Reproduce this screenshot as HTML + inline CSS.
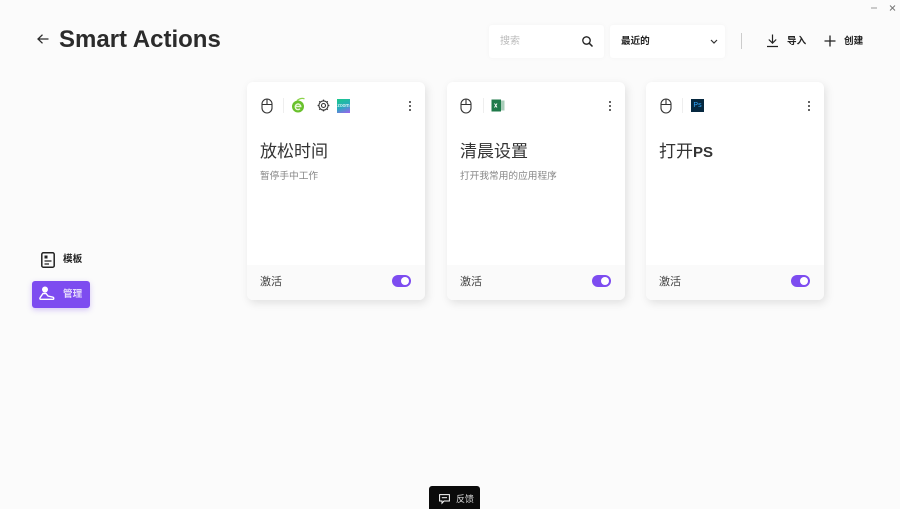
<!DOCTYPE html>
<html><head><meta charset="utf-8">
<style>
*{box-sizing:border-box;margin:0;padding:0}
html,body{width:900px;height:509px;overflow:hidden;background:#fbfbfb;font-family:"Liberation Sans","Noto Sans CJK SC",sans-serif;color:#2b2b2b}
.a{position:absolute}
svg{position:absolute;overflow:visible}
.box{position:absolute;background:#fff;border-radius:3px;box-shadow:0 0 4px rgba(0,0,0,.04)}
.card{position:absolute;top:82px;width:178px;height:218px;background:#fff;border-radius:6px;box-shadow:2px 3px 9px rgba(0,0,0,.11);overflow:hidden}
.foot{position:absolute;left:0;right:0;bottom:0;height:35px;background:#fafafa}
.foot span{position:absolute;left:13px;top:8px;font-size:11px;line-height:18px;color:#444}
.tg{position:absolute;left:145px;top:10px;width:19px;height:12px;border-radius:6px;background:#7d4cf0}
.tg i{position:absolute;right:2px;top:2px;width:8px;height:8px;border-radius:50%;background:#fff}
.t{position:absolute;left:13px;top:58px;font-size:17px;line-height:24px;color:#333;white-space:nowrap}
.s{position:absolute;left:13px;top:88px;font-size:9.700px;line-height:14px;color:#888;white-space:nowrap}
.dv{position:absolute;left:36px;top:16px;width:1px;height:15px;background:#eee}
.dots{position:absolute;left:162px;top:18.500px;width:2.400px;height:2.400px;border-radius:50%;background:#333;box-shadow:0 4px 0 #333,0 8px 0 #333}
.b{font-weight:700;font-size:9.600px;line-height:14px;color:#222;white-space:nowrap;position:absolute}
</style></head><body>

<svg style="left:870px;top:5px" width="24" height="6" viewBox="0 0 24 6"><path d="M1 3H7" stroke="#999" stroke-width="1"/><path d="M20 0.500L25 5.500M25 .5L20 5.500" stroke="#777" stroke-width="1"/></svg>

<svg style="left:36px;top:32px" width="14" height="14" viewBox="0 0 14 14"><path d="M12.500 7H2M6.500 2.700L2 7L6.500 11.300" fill="none" stroke="#2b2b2b" stroke-width="1.300"/></svg>
<div class="a" style="left:59px;top:24px;font-size:24px;line-height:32px;font-weight:700;color:#2b2b2b;white-space:nowrap">Smart Actions</div>

<div class="box" style="left:489px;top:25px;width:115px;height:33px"></div>
<div class="a" style="left:500px;top:35px;font-size:10px;line-height:14px;color:#bbb">搜索</div>
<svg style="left:581px;top:35px" width="13" height="13" viewBox="0 0 13 13"><circle cx="5.500" cy="5.500" r="3.700" fill="none" stroke="#222" stroke-width="1.300"/><path d="M8.300 8.300L11.500 11.500" stroke="#222" stroke-width="1.500"/></svg>
<div class="box" style="left:610px;top:25px;width:115px;height:33px"></div>
<div class="b" style="left:621px;top:35px">最近的</div>
<svg style="left:710px;top:39px" width="8" height="5" viewBox="0 0 8 5"><path d="M1 1L4 4L7 1" fill="none" stroke="#333" stroke-width="1.200"/></svg>
<div class="a" style="left:741px;top:33px;width:1px;height:16px;background:#ccc"></div>
<svg style="left:766px;top:34px" width="13" height="14" viewBox="0 0 13 14"><path d="M6.500 0.500V9M2.800 5.500L6.500 9.200L10.200 5.500M1 12.500H12" fill="none" stroke="#222" stroke-width="1.200"/></svg>
<div class="b" style="left:787px;top:35px">导入</div>
<svg style="left:824px;top:35px" width="12" height="12" viewBox="0 0 12 12"><path d="M6 .5V11.500M.5 6H11.500" stroke="#222" stroke-width="1.300"/></svg>
<div class="b" style="left:844px;top:35px">创建</div>

<svg style="left:41px;top:252px" width="14" height="16" viewBox="0 0 14 16"><rect x=".8" y=".8" width="12.400" height="14.400" rx="1.500" fill="none" stroke="#222" stroke-width="1.500"/><rect x="3.500" y="3.500" width="3" height="3" fill="#222"/><path d="M3.500 9H10.500M3.500 12H8" stroke="#222" stroke-width="1.200"/></svg>
<div class="b" style="left:63px;top:253px">模板</div>
<div class="a" style="left:32px;top:281px;width:58px;height:27px;border-radius:3px;background:#7d4cf0;box-shadow:0 2px 6px rgba(125,76,240,.3)"></div>
<svg style="left:39px;top:286px" width="16" height="15" viewBox="0 0 16 15"><circle cx="6" cy="3.500" r="3" fill="#fff"/><path d="M4 7.500H7L9 10L14 11.200C15 11.500 15 13.300 14 13.300H1.500C.7 13.300 .7 12.300 1.200 11.500Z" fill="none" stroke="#fff" stroke-width="1.400"/></svg>
<div class="b" style="left:63px;top:288px;color:#e4dafc">管理</div>

<div class="card" style="left:247px">
<svg style="left:14px;top:16px" width="12" height="16" viewBox="0 0 12 16"><rect x="1" y="1" width="10" height="14" rx="5" fill="none" stroke="#333" stroke-width="1.100"/><path d="M1 6.500H11M6 1V6.500" stroke="#333" stroke-width="1.100"/></svg>
<div class="dv"></div>
<svg style="left:45px;top:16px" width="13" height="15" viewBox="0 0 13 15"><circle cx="6" cy="8.500" r="6" fill="#69c12c"/><path d="M3.500 8.500H8.800A2.800 2.800 0 1 0 8 10.800" fill="none" stroke="#e8f6d8" stroke-width="1.400"/><path d="M5 2.500Q9-.5 12.500 .8" fill="none" stroke="#8bd34a" stroke-width="1.200"/></svg>
<svg style="left:70px;top:17px" width="13" height="13" viewBox="0 0 13 13"><circle cx="6.500" cy="6.500" r="2" fill="none" stroke="#333" stroke-width="1.100"/><circle cx="6.500" cy="6.500" r="4.600" fill="none" stroke="#333" stroke-width="1.100"/><path d="M6.500 .6V2M6.500 11V12.400M.6 6.500H2M11 6.500H12.400M2.300 2.300L3.300 3.300M9.700 9.700L10.700 10.700M2.300 10.700L3.300 9.700M9.700 3.300L10.700 2.300" stroke="#333" stroke-width="1.300"/></svg>
<div class="a" style="left:90px;top:17px;width:13px;height:14px;background:linear-gradient(160deg,#19c98a 0%,#2aa9c0 55%,#a35ff0 100%);color:#fff;font-size:5px;line-height:14px;text-align:center;overflow:hidden">zoom</div>
<div class="dots"></div>
<div class="t">放松时间</div>
<div class="s">暂停手中工作</div>
<div class="foot"><span>激活</span><div class="tg"><i></i></div></div>
</div>

<div class="card" style="left:447px">
<svg style="left:13px;top:16px" width="12" height="16" viewBox="0 0 12 16"><rect x="1" y="1" width="10" height="14" rx="5" fill="none" stroke="#333" stroke-width="1.100"/><path d="M1 6.500H11M6 1V6.500" stroke="#333" stroke-width="1.100"/></svg>
<div class="dv"></div>
<svg style="left:44px;top:17px" width="14" height="13" viewBox="0 0 14 13"><rect x="6" y="1.500" width="7.500" height="10" fill="#a9cdb9"/><rect x="0.500" y="0.500" width="9.500" height="12" fill="#1f7a4a"/><path d="M3.500 4.500L6 8.500M6 4.500L3.500 8.500" stroke="#fff" stroke-width=".9"/></svg>
<div class="dots"></div>
<div class="t">清晨设置</div>
<div class="s">打开我常用的应用程序</div>
<div class="foot"><span>激活</span><div class="tg"><i></i></div></div>
</div>

<div class="card" style="left:646px">
<svg style="left:14px;top:16px" width="12" height="16" viewBox="0 0 12 16"><rect x="1" y="1" width="10" height="14" rx="5" fill="none" stroke="#333" stroke-width="1.100"/><path d="M1 6.500H11M6 1V6.500" stroke="#333" stroke-width="1.100"/></svg>
<div class="dv"></div>
<div class="a" style="left:45px;top:17px;width:13px;height:13px;background:#06283f;color:#31a8ff;font-size:7px;line-height:13px;text-align:center;font-weight:400">Ps</div>
<div class="dots"></div>
<div class="t">打开<b style="font-weight:700;font-size:15px">PS</b></div>
<div class="foot"><span>激活</span><div class="tg"><i></i></div></div>
</div>

<div class="a" style="left:429px;top:486px;width:51px;height:23px;background:#0b0b0b;border-radius:3px 3px 0 0"></div>
<svg style="left:439px;top:494px" width="11" height="10" viewBox="0 0 11 10"><path d="M.6 .6H10.400V7H5L3 9.200V7H.6Z" fill="none" stroke="#fff" stroke-width="1"/><path d="M2.800 3.700H8" stroke="#fff" stroke-width="1"/></svg>
<div class="a" style="left:456px;top:492px;font-size:9px;line-height:14px;color:#ddd;white-space:nowrap">反馈</div>
</body></html>
